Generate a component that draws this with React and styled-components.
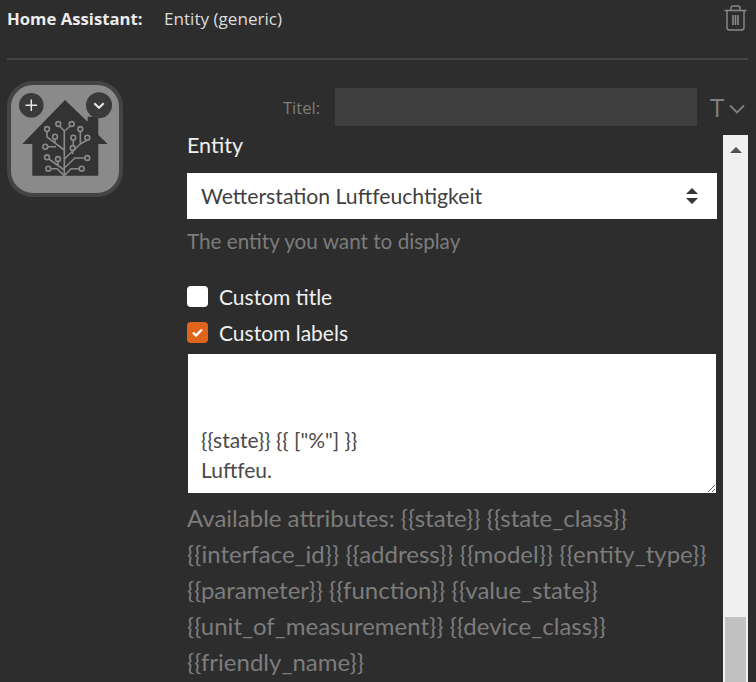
import React from "react";
import styled, { createGlobalStyle } from "styled-components";

const GlobalStyle = createGlobalStyle`
  html, body {
    margin: 0;
    height: 682px;
    overflow: hidden;
    background: #2d2d2d;
    font-family: Lato, "Noto Sans", sans-serif;
  }
  * { box-sizing: border-box; }
`;

const Page = styled.div`
  height: 682px;
  padding: 0 8px 0 7px;
  display: flex;
  flex-direction: column;
  overflow: hidden;
`;

const Header = styled.div`
  height: 60px;
  flex: none;
  display: flex;
  align-items: flex-start;
  border-bottom: 2px solid #444;
  padding-top: 9px;
  line-height: 20px;
`;

const TypeName = styled.b`
  width: 157px;
  font-family: "Open Sans", sans-serif;
  font-size: 16.7px;
  font-weight: 700;
  color: #ececec;
`;

const TypeValue = styled.span`
  flex: 1;
  font-family: "Open Sans", sans-serif;
  font-size: 17.1px;
  color: #dcdcdc;
`;

const TrashIcon = styled.svg`
  width: 23px;
  height: 26px;
  margin: -4px 1px 0 0;
  color: #8a8a8a;
`;

const Body = styled.div`
  flex: 1;
  min-height: 0;
  display: flex;
  padding-top: 21px;
`;

const Tile = styled.div`
  width: 116px;
  height: 116px;
  flex: none;
  margin-right: 64px;
  border: 4px solid #444;
  border-radius: 26px;
  background: #8a8a8a;
`;

const Main = styled.div`
  flex: 1;
  min-width: 0;
  display: flex;
  flex-direction: column;
`;

const TitleRow = styled.div`
  height: 38px;
  margin-top: 7px;
  flex: none;
  display: flex;
  align-items: center;
`;

const TitleLabel = styled.label`
  width: 133px;
  text-align: right;
  font-family: "Open Sans", sans-serif;
  font-size: 16.6px;
  color: #7c7c7c;
`;

const TitleInput = styled.input`
  width: 362px;
  height: 38px;
  margin-left: 15px;
  border: 0;
  background: #3f3f3f;
`;

const FontButton = styled.div`
  margin-left: 13px;
  display: flex;
  align-items: center;
  color: #808080;
  font-family: "Open Sans", sans-serif;
  font-size: 26px;
  line-height: 38px;
  svg { margin: 3px 0 0 5px; }
`;

const ScrollArea = styled.div`
  flex: 1;
  min-height: 0;
  margin-top: 9px;
  display: flex;
`;

const Form = styled.div`
  width: 536px;
  flex: none;
`;

const FieldLabel = styled.div`
  font-size: 21.5px;
  line-height: 20px;
  color: #f0f0f0;
`;

const Select = styled.div`
  height: 46px;
  width: 530px;
  margin-top: 18px;
  padding: 0 19px 0 14px;
  display: flex;
  align-items: center;
  justify-content: space-between;
  background: #fff;
  color: #3f3f3f;
  font-size: 21.2px;
`;

const Hint = styled.div`
  margin-top: 10px;
  font-size: 20.7px;
  line-height: 24px;
  color: #7c7c7c;
`;

const CheckList = styled.div`
  margin-top: 25px;
`;

const CheckRow = styled.div`
  height: 36px;
  display: flex;
  align-items: center;
  font-size: 21px;
  color: #f0f0f0;
`;

const Box = styled.span`
  width: 21px;
  height: 21px;
  margin-right: 11px;
  border-radius: 4px;
  display: flex;
  align-items: center;
  justify-content: center;
  background: ${(p) => (p.$on ? "#e0641c" : "#fff")};
`;

const Area = styled.textarea`
  display: block;
  width: 528px;
  height: 139px;
  margin: 4px 0 0 1px;
  padding: 11px 13px 8px;
  border: 0;
  border-radius: 0;
  outline: 0;
  background: #fff;
  color: #4a4a4a;
  font-family: inherit;
  font-size: 21px;
  line-height: 30px;
  overflow: hidden;
`;

const Attributes = styled.div`
  margin-top: 7px;
  font-size: 24px;
  line-height: 36px;
  white-space: nowrap;
  color: #7c7c7c;
`;

const Track = styled.div`
  width: 25px;
  flex: none;
  display: flex;
  flex-direction: column;
  align-items: center;
  background: #f0f0f0;
`;

const TrackArrow = styled.svg`
  width: 12px;
  height: 6px;
  margin-top: 12px;
  flex: none;
`;

const Thumb = styled.div`
  width: 21px;
  flex: 1;
  margin-top: 464px;
  background: #c1c1c1;
`;

const Trash = () => (
  <TrashIcon viewBox="0 0 23 26" fill="none" stroke="currentColor" strokeWidth="1.4">
    <path d="M.5 5.500h22M7 5.500V3c0-1.200.8-2 2-2h5c1.200 0 2 .8 2 2v2.500M3 5.500v17C3 24 4 25 5.500 25h12c1.500 0 2.500-1 2.500-2.500v-17" />
    <path d="M9 10v10M11.500 10v10M14 10v10" strokeWidth="1.600" />
  </TrashIcon>
);

const Logo = () => (
  <svg width="108" height="108" viewBox="0 0 108 108" style={{ display: "block" }}>
    <path
      d="M54 15L76.700 36.700V31.700H87.300V50L96.700 59H87.300V90.700H21.300V59H11.300Z"
      fill="#333"
    />
    <g fill="none" stroke="#8a8a8a" strokeWidth="1.600">
      <path d="M53.300 90.700V46M53.300 46L48.500 41M53.300 46L59.500 41" />
      <path d="M36 46.400V52L53.300 65M44 54V58M36.700 61.700H45" />
      <path d="M69.300 46.400V59L53.300 74M62.300 55V60M76.300 55L69.300 59" />
      <path d="M61.700 65.400V69M73.900 73H64L53.300 83" />
      <path d="M38 74L53.300 85M47 76.400V80" />
      <path d="M39.700 83.700H46L53.300 90.700M68.300 83.700H60L53.300 90.700" />
      <circle cx="47.300" cy="39" r="2.400" />
      <circle cx="60.700" cy="39" r="2.400" />
      <circle cx="36" cy="44" r="2.400" />
      <circle cx="69.300" cy="44" r="2.400" />
      <circle cx="44" cy="51.700" r="2.400" />
      <circle cx="62.300" cy="52.700" r="2.400" />
      <circle cx="76.300" cy="52.700" r="2.400" />
      <circle cx="34.300" cy="61.700" r="2.400" />
      <circle cx="61.700" cy="63" r="2.400" />
      <circle cx="36" cy="72.300" r="2.400" />
      <circle cx="47" cy="74" r="2.400" />
      <circle cx="76.300" cy="73" r="2.400" />
      <circle cx="37.300" cy="83.700" r="2.400" />
      <circle cx="70.700" cy="83.700" r="2.400" />
    </g>
    <circle cx="20.300" cy="20.300" r="12.300" fill="#3a3a3a" />
    <path d="M20.300 14.500v11.600M14.500 20.300h11.600" stroke="#e6e6e6" strokeWidth="1.500" />
    <circle cx="88" cy="20.300" r="13" fill="#3a3a3a" />
    <path d="M83.300 18.300l4.700 4.400 4.700-4.400" fill="none" stroke="#e6e6e6" strokeWidth="2.200" />
  </svg>
);

const App = () => (
  <Page>
    <GlobalStyle />
    <Header>
      <TypeName>Home Assistant:</TypeName>
      <TypeValue>Entity (generic)</TypeValue>
      <Trash />
    </Header>
    <Body>
      <Tile>
        <Logo />
      </Tile>
      <Main>
        <TitleRow>
          <TitleLabel>Titel:</TitleLabel>
          <TitleInput />
          <FontButton>
            T
            <svg width="16" height="10" viewBox="0 0 16 10">
              <path d="M1 1.500l7 7 7-7" fill="none" stroke="#808080" strokeWidth="1.800" />
            </svg>
          </FontButton>
        </TitleRow>
        <ScrollArea>
          <Form>
            <FieldLabel>Entity</FieldLabel>
            <Select>
              Wetterstation Luftfeuchtigkeit
              <svg width="12" height="16" viewBox="0 0 12 16">
                <path d="M6 0l6 6H0zM6 16l6-6H0z" fill="#363636" />
              </svg>
            </Select>
            <Hint>The entity you want to display</Hint>
            <CheckList>
              <CheckRow>
                <Box />
                Custom title
              </CheckRow>
              <CheckRow>
                <Box $on>
                  <svg width="13" height="11" viewBox="0 0 13 11">
                    <path d="M2 5.500l3 3 6-6" fill="none" stroke="#fff" strokeWidth="2.400" />
                  </svg>
                </Box>
                Custom labels
              </CheckRow>
            </CheckList>
            <Area
              readOnly
              value={'\n\n{{state}} {{ ["%"] }}\nLuftfeu.'}
            />
            <Attributes>
              Available attributes: {"{{state}} {{state_class}}"}
              <br />
              {"{{interface_id}} {{address}} {{model}} {{entity_type}}"}
              <br />
              {"{{parameter}} {{function}} {{value_state}}"}
              <br />
              {"{{unit_of_measurement}} {{device_class}}"}
              <br />
              {"{{friendly_name}}"}
            </Attributes>
          </Form>
          <Track>
            <TrackArrow viewBox="0 0 12 6">
              <path d="M6 0l6 6H0z" fill="#505050" />
            </TrackArrow>
            <Thumb />
          </Track>
        </ScrollArea>
      </Main>
    </Body>
  </Page>
);

export default App;
